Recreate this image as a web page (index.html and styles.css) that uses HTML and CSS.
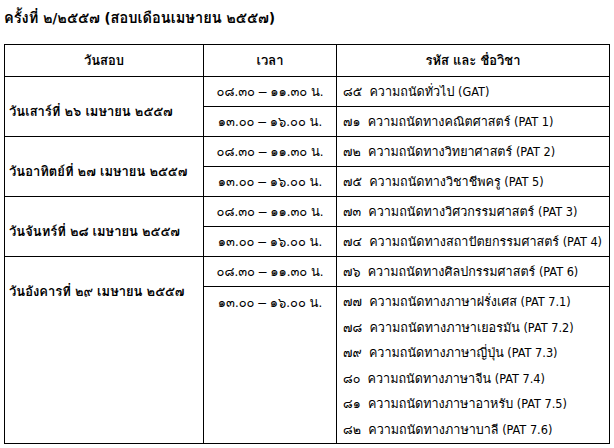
FILE: index.html
```html
<!DOCTYPE html>
<html lang="th">
<head>
<meta charset="utf-8">
<title>ตารางสอบ</title>
<link rel="stylesheet" href="styles.css">
</head>
<body>
<h1 class="title">ครั้งที่ ๒/๒๕๕๗ (สอบเดือนเมษายน ๒๕๕๗)</h1>
<table class="exam">
  <colgroup>
    <col class="c-day">
    <col class="c-time">
    <col class="c-subj">
  </colgroup>
  <thead>
    <tr class="head">
      <th>วันสอบ</th>
      <th>เวลา</th>
      <th>รหัส และ ชื่อวิชา</th>
    </tr>
  </thead>
  <tbody>
    <tr>
      <td class="day" rowspan="2">วันเสาร์ที่ ๒๖ เมษายน ๒๕๕๗</td>
      <td class="time">๐๘.๓๐ <span class="dash">–</span> ๑๑.๓๐ น.</td>
      <td class="subj">๘๕&nbsp; ความถนัดทั่วไป (GAT)</td>
    </tr>
    <tr>
      <td class="time">๑๓.๐๐ <span class="dash">–</span> ๑๖.๐๐ น.</td>
      <td class="subj">๗๑&nbsp; ความถนัดทางคณิตศาสตร์ (PAT 1)</td>
    </tr>
    <tr>
      <td class="day" rowspan="2">วันอาทิตย์ที่ ๒๗ เมษายน ๒๕๕๗</td>
      <td class="time">๐๘.๓๐ <span class="dash">–</span> ๑๑.๓๐ น.</td>
      <td class="subj">๗๒&nbsp; ความถนัดทางวิทยาศาสตร์ (PAT 2)</td>
    </tr>
    <tr>
      <td class="time">๑๓.๐๐ <span class="dash">–</span> ๑๖.๐๐ น.</td>
      <td class="subj">๗๕&nbsp; ความถนัดทางวิชาชีพครู (PAT 5)</td>
    </tr>
    <tr>
      <td class="day" rowspan="2">วันจันทร์ที่ ๒๘ เมษายน ๒๕๕๗</td>
      <td class="time">๐๘.๓๐ <span class="dash">–</span> ๑๑.๓๐ น.</td>
      <td class="subj">๗๓&nbsp; ความถนัดทางวิศวกรรมศาสตร์ (PAT 3)</td>
    </tr>
    <tr>
      <td class="time">๑๓.๐๐ <span class="dash">–</span> ๑๖.๐๐ น.</td>
      <td class="subj">๗๔&nbsp; ความถนัดทางสถาปัตยกรรมศาสตร์ (PAT 4)</td>
    </tr>
    <tr>
      <td class="day day-top" rowspan="2">วันอังคารที่ ๒๙ เมษายน ๒๕๕๗</td>
      <td class="time">๐๘.๓๐ <span class="dash">–</span> ๑๑.๓๐ น.</td>
      <td class="subj">๗๖&nbsp; ความถนัดทางศิลปกรรมศาสตร์ (PAT 6)</td>
    </tr>
    <tr class="multi">
      <td class="time time-top">๑๓.๐๐ <span class="dash">–</span> ๑๖.๐๐ น.</td>
      <td class="subj subj-list">
        <div class="line">๗๗&nbsp; ความถนัดทางภาษาฝรั่งเศส (PAT 7.1)</div>
        <div class="line">๗๘&nbsp; ความถนัดทางภาษาเยอรมัน (PAT 7.2)</div>
        <div class="line">๗๙&nbsp; ความถนัดทางภาษาญี่ปุ่น (PAT 7.3)</div>
        <div class="line">๘๐&nbsp; ความถนัดทางภาษาจีน (PAT 7.4)</div>
        <div class="line">๘๑&nbsp; ความถนัดทางภาษาอาหรับ (PAT 7.5)</div>
        <div class="line">๘๒&nbsp; ความถนัดทางภาษาบาลี (PAT 7.6)</div>
      </td>
    </tr>
  </tbody>
</table>
</body>
</html>
```
FILE: styles.css
```css
html, body {
  margin: 0;
  padding: 0;
  background: #fff;
}
body {
  padding: 0 4px;
  font-family: "DejaVu Sans Condensed", Loma, "Noto Sans Thai Looped", sans-serif;
  font-size: 13px;
  color: #000;
}
.title {
  margin: 0;
  padding-top: 6px;
  height: 38px;
  font-size: 14.6px;
  line-height: 24px;
  font-weight: bold;
}
.exam {
  border-collapse: collapse;
  table-layout: fixed;
  width: 605px;
}
.c-day { width: 199px; }
.c-time { width: 133px; }
.c-subj { width: 273px; }
.exam th, .exam td {
  border: 1px solid #000;
  padding: 0;
  line-height: 29px;
  vertical-align: middle;
}
.exam th {
  height: 31px;
  font-weight: bold;
  text-align: center;
}
.day {
  font-weight: bold;
  text-align: left;
  padding-left: 4px !important;
  padding-top: 9px !important;
  white-space: nowrap;
}
.day-top {
  vertical-align: top !important;
  padding-top: 20px !important;
}
.time {
  text-align: center;
  white-space: nowrap;
}
.dash {
  font-family: "Liberation Sans", sans-serif;
  font-size: 14px;
}
.time-top {
  vertical-align: top !important;
  line-height: 26px !important;
  padding-top: 2px !important;
}
.subj {
  padding-left: 6px !important;
  white-space: nowrap;
  font-size: 12.6px;
}
.subj-list {
  padding-top: 2px !important;
  padding-bottom: 0 !important;
}
.subj-list .line {
  line-height: 25.6px;
}
```
